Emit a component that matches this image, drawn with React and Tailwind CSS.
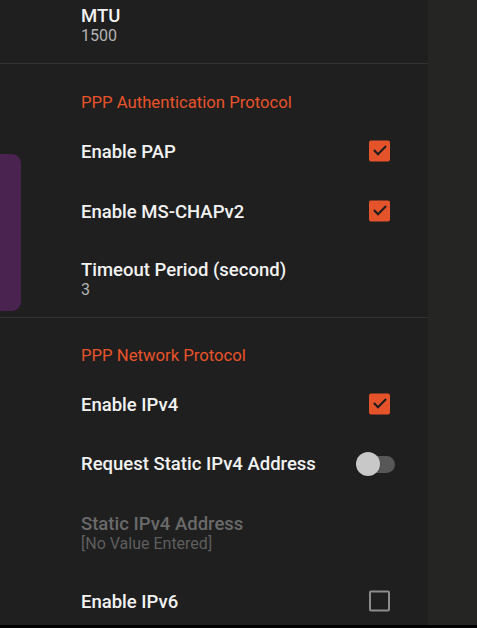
import React from "react";

function Check({ on }) {
  if (!on) {
    return <div className="w-[21px] h-[21px] -translate-y-[1.5px] rounded-[2px] border-2 border-[#8c8c8c]" />;
  }
  return (
    <div className="w-[21px] h-[21px] -translate-y-[1.5px] rounded-[2px] bg-[#e5532b] flex items-center justify-center">
      <svg width="16" height="16" viewBox="0 0 24 24" fill="none">
        <path d="M4 12.5l5 5L20 6.5" stroke="#1e1e1e" strokeWidth="3.2" strokeLinecap="square" />
      </svg>
    </div>
  );
}

function Toggle() {
  return (
    <div className="relative w-[39px] h-[24px] mr-[-5px] flex items-center">
      <div className="ml-[3px] w-[36px] h-[17px] rounded-full bg-[#575757]" />
      <div className="absolute left-0 top-0 w-[24px] h-[24px] rounded-full bg-[#c8c8c8] shadow" />
    </div>
  );
}

function Row({ label, h, children }) {
  return (
    <div className={`flex items-center justify-between pl-[81px] pr-[38px] ${h}`}>
      <span className="text-[18.5px] leading-[22px] font-medium text-[#f2f2f2]">{label}</span>
      {children}
    </div>
  );
}

function Header({ text, h, pt }) {
  return (
    <div className={`pl-[81px] ${h} ${pt}`}>
      <div className="text-[16.7px] leading-[20px] text-[#e8532a]">{text}</div>
    </div>
  );
}

export default function App() {
  return (
    <div
      className="w-[477px] h-[628px] flex flex-col bg-black overflow-hidden"
      style={{ fontFamily: "Roboto, 'Noto Sans', sans-serif" }}
    >
      <div className="flex h-[625px] shrink-0">
        <div className="relative w-[428px] h-full overflow-hidden bg-[#1f1f1f]">
          <div className="absolute left-0 top-[154px] w-[21px] h-[157px] rounded-r-[9px] bg-[#4a2351]" />

          <div className="h-[63px] pl-[81px] pt-[5px]">
            <div className="text-[18.5px] leading-[22px] font-medium text-[#f2f2f2]">MTU</div>
            <div className="text-[16px] leading-[18px] text-[#b4b4b4]">1500</div>
          </div>
          <div className="h-px bg-[#333333]" />

          <Header text="PPP Authentication Protocol" h="h-[58px]" pt="pt-[29px]" />
          <Row label="Enable PAP" h="h-[60px]">
            <Check on />
          </Row>
          <Row label="Enable MS-CHAPv2" h="h-[60px]">
            <Check on />
          </Row>
          <div className="h-[75px] pl-[81px] pt-[17px]">
            <div className="text-[18.5px] leading-[22px] font-medium text-[#f2f2f2]">Timeout Period (second)</div>
            <div className="text-[16px] leading-[18px] text-[#b4b4b4]">3</div>
          </div>
          <div className="h-px bg-[#333333]" />

          <Header text="PPP Network Protocol" h="h-[58px]" pt="pt-[28px]" />
          <Row label="Enable IPv4" h="h-[58px]">
            <Check on />
          </Row>
          <Row label="Request Static IPv4 Address" h="h-[60px]">
            <Toggle />
          </Row>
          <div className="h-[80px] pl-[81px] pt-[19px]">
            <div className="text-[18.5px] leading-[22px] font-medium text-[#6a6a6a]">Static IPv4 Address</div>
            <div className="text-[16px] leading-[18px] text-[#5e5e5e]">[No Value Entered]</div>
          </div>
          <Row label="Enable IPv6" h="h-[56px]">
            <Check />
          </Row>
        </div>
        <div className="flex-1 bg-[#252523]" />
      </div>
      <div className="h-[3px] bg-black" />
    </div>
  );
}
